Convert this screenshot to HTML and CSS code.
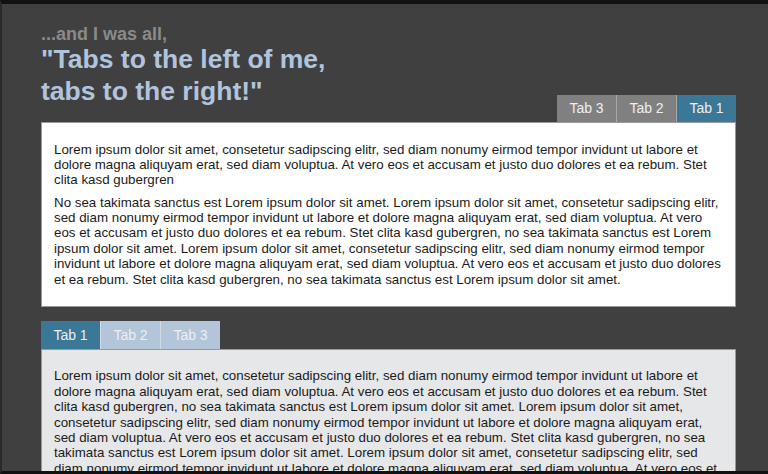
FILE: index.html
```html
<!DOCTYPE html>
<html>
<head>
<meta charset="utf-8">
<link rel="stylesheet" href="styles.css">
</head>
<body>
<div class="frame">
  <div class="page">
    <div class="top">
      <div class="heading">
        <div class="sub">...and I was all,</div>
        <h1 class="title">"Tabs to the left of me,<br>tabs to the right!"</h1>
      </div>
      <div class="tabs tabs-right">
        <div class="tab tab-grey">Tab 3</div>
        <div class="tab tab-grey">Tab 2</div>
        <div class="tab tab-active">Tab 1</div>
      </div>
    </div>
    <div class="panel panel-white">
      <p>Lorem ipsum dolor sit amet, consetetur sadipscing elitr, sed diam nonumy eirmod tempor invidunt ut labore et dolore magna aliquyam erat, sed diam voluptua. At vero eos et accusam et justo duo dolores et ea rebum. Stet clita kasd gubergren</p>
      <p>No sea takimata sanctus est Lorem ipsum dolor sit amet. Lorem ipsum dolor sit amet, consetetur sadipscing elitr, sed diam nonumy eirmod tempor invidunt ut labore et dolore magna aliquyam erat, sed diam voluptua. At vero eos et accusam et justo duo dolores et ea rebum. Stet clita kasd gubergren, no sea takimata sanctus est Lorem ipsum dolor sit amet. Lorem ipsum dolor sit amet, consetetur sadipscing elitr, sed diam nonumy eirmod tempor invidunt ut labore et dolore magna aliquyam erat, sed diam voluptua. At vero eos et accusam et justo duo dolores et ea rebum. Stet clita kasd gubergren, no sea takimata sanctus est Lorem ipsum dolor sit amet.</p>
    </div>
    <div class="tabs tabs-left">
      <div class="tab tab-active">Tab 1</div>
      <div class="tab tab-light">Tab 2</div>
      <div class="tab tab-light">Tab 3</div>
    </div>
    <div class="panel panel-grey">
      <p>Lorem ipsum dolor sit amet, consetetur sadipscing elitr, sed diam nonumy eirmod tempor invidunt ut labore et dolore magna aliquyam erat, sed diam voluptua. At vero eos et accusam et justo duo dolores et ea rebum. Stet clita kasd gubergren, no sea takimata sanctus est Lorem ipsum dolor sit amet. Lorem ipsum dolor sit amet, consetetur sadipscing elitr, sed diam nonumy eirmod tempor invidunt ut labore et dolore magna aliquyam erat, sed diam voluptua. At vero eos et accusam et justo duo dolores et ea rebum. Stet clita kasd gubergren, no sea takimata sanctus est Lorem ipsum dolor sit amet. Lorem ipsum dolor sit amet, consetetur sadipscing elitr, sed diam nonumy eirmod tempor invidunt ut labore et dolore magna aliquyam erat, sed diam voluptua. At vero eos et accusam et justo duo dolores et ea rebum.</p>
    </div>
  </div>
</div>
</body>
</html>
```

FILE: styles.css
```css
html, body {
  margin: 0;
  padding: 0;
  background: #111;
}
.frame {
  box-sizing: border-box;
  width: 768px;
  height: 474px;
  overflow: hidden;
  background: #404040;
  border-top: 4px solid #111;
  border-left: 2px solid #2a2a2a;
  border-bottom: 3px solid #111;
  font-family: "Liberation Sans", Arial, sans-serif;
}
.page {
  width: 695px;
  padding-left: 39px;
  padding-top: 20px;
}
.top {
  display: flex;
  justify-content: space-between;
  align-items: flex-end;
}
.sub {
  color: #8a8a8a;
  font-weight: bold;
  font-size: 18px;
  line-height: 20px;
}
.title {
  margin: 0 0 15px 0;
  color: #b0c4de;
  font-size: 26.5px;
  line-height: 31.5px;
  font-weight: bold;
}
.tabs {
  display: flex;
}
.tab {
  width: 59px;
  height: 27px;
  line-height: 27px;
  text-align: center;
  font-size: 14px;
  color: #eeeeee;
}
.tab + .tab {
  border-left: 1px solid #a8a8a8;
}
.tab-grey {
  background: #808081;
}
.tab-active {
  background: #3b7797;
}
.tabs-left {
  margin-top: 14px;
}
.tabs-left .tab {
  height: 28px;
  line-height: 28px;
}
.tab-light {
  background: #b2c5d9;
}
.tabs-left .tab + .tab {
  border-left: 1px solid #d0dbe6;
}
.panel {
  border: 1px solid #999;
  padding: 12px;
  font-size: 13.33px;
  line-height: 15.4px;
  color: #1a1a1a;
}
.panel p {
  margin: 6.67px 0;
}
.panel-white {
  background: #ffffff;
}
.panel-grey {
  background: #e6e7e9;
}
```
